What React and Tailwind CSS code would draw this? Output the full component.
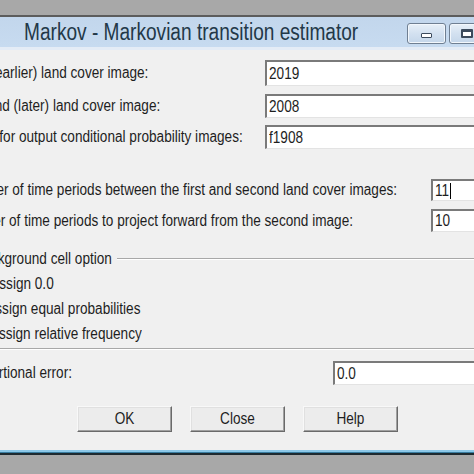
import React from "react";

const font = { fontFamily: '"Liberation Sans", Arial, sans-serif' };

function Label({ end, children, className = "" }) {
  return (
    <div className={"flex justify-end shrink-0 whitespace-nowrap " + className} style={{ width: end }}>
      <span className="inline-block scale-x-[0.85] origin-right">{children}</span>
    </div>
  );
}

function Field({ value, cursor }) {
  return (
    <div className="flex-1 h-full bg-white border-t-2 border-l-2 border-t-[#7a7a7a] border-l-[#7a7a7a] border-b border-r border-b-[#e3e3e3] border-r-[#e3e3e3] flex items-center pl-[2px] -mr-[40px]">
      <span className="inline-block scale-x-[0.85] origin-left">{value}</span>
      {cursor && <span className="inline-block w-px h-[16px] bg-black -ml-[2px]" />}
    </div>
  );
}

function Btn({ children }) {
  return (
    <div className="w-[95px] h-[26px] bg-[#ececec] border border-t-[#f8f8f8] border-l-[#f8f8f8] border-b-[#6a6a6a] border-r-[#6a6a6a] shadow-[inset_-1px_-1px_0_#a0a0a0,inset_1px_1px_0_#e0e0e0] flex items-center justify-center">
      <span className="inline-block scale-x-[0.85]">{children}</span>
    </div>
  );
}

export default function App() {
  return (
    <div className="w-[474px] h-[474px] overflow-hidden bg-[#f0f0f0] flex flex-col text-[16px] text-[#1e1e1e]" style={font}>
      {/* top gray strip */}
      <div className="h-[15px] bg-[#a8a8a8] shrink-0" />
      <div className="h-[2px] bg-[#5c5c5c] shrink-0" />
      {/* title bar */}
      <div className="h-[30px] shrink-0 bg-gradient-to-b from-[#c2d6ec] to-[#c7dbf0] flex items-center">
        <div className="flex-1 min-w-0 whitespace-nowrap pl-[24px] text-[23px] text-[#233848] leading-none pt-[1px]">
          <span className="inline-block scale-x-[0.83] origin-left">Markov - Markovian transition estimator</span>
        </div>
        <div className="shrink-0 w-[67px] flex gap-[3px] self-start mt-[6px]">
          <div className="shrink-0 w-[39px] h-[21px] rounded-[3px] border border-[#6f7f92] bg-gradient-to-b from-[#e8f0f8] via-[#d3e1f0] to-[#c4d6ea] shadow-[inset_0_0_0_1px_#f2f7fc] flex items-center justify-center">
            <div className="w-[11px] h-[5px] mt-[4px] bg-white border border-[#3b4a5c] rounded-[1px]" />
          </div>
          <div className="shrink-0 w-[39px] h-[21px] rounded-[3px] border border-[#6f7f92] bg-gradient-to-b from-[#e8f0f8] via-[#d3e1f0] to-[#c4d6ea] shadow-[inset_0_0_0_1px_#f2f7fc] flex items-center justify-center">
            <div className="w-[12px] h-[9px] ml-[-4px] bg-white border-2 border-[#3b4a5c] border-t-[3px] rounded-[1px]" />
          </div>
        </div>
      </div>
      <div className="h-[3px] bg-[#e4ecf6] shrink-0" />
      {/* body */}
      <div className="flex-1 flex flex-col">
        <div className="h-[10px]" />
        <div className="flex items-center h-[26px]">
          <Label end={148}>First (earlier) land cover image:</Label>
          <div className="w-[117px]" />
          <Field value="2019" />
        </div>
        <div className="h-[8px]" />
        <div className="flex items-center h-[24px]">
          <Label end={160}>Second (later) land cover image:</Label>
          <div className="w-[105px]" />
          <Field value="2008" />
        </div>
        <div className="h-[7px]" />
        <div className="flex items-center h-[24px]">
          <Label end={243}>Prefix for output conditional probability images:</Label>
          <div className="w-[22px]" />
          <Field value="f1908" />
        </div>
        <div className="h-[30px]" />
        <div className="flex items-center h-[22px]">
          <Label end={397}>Number of time periods between the first and second land cover images:</Label>
          <div className="w-[34px]" />
          <Field value="11" cursor />
        </div>
        <div className="h-[8px]" />
        <div className="flex items-center h-[23px]">
          <Label end={353}>Number of time periods to project forward from the second image:</Label>
          <div className="w-[78px]" />
          <Field value="10" />
        </div>
        <div className="h-[17px]" />
        <div className="flex items-center h-[20px]">
          <Label end={112}>Background cell option</Label>
          <div className="w-[5px]" />
          <div className="flex-1 h-px bg-[#a8a8a8] border-b border-white box-content" />
        </div>
        <div className="h-[2px]" />
        <div className="flex items-center h-[25px]">
          <Label end={54}>Assign 0.0</Label>
        </div>
        <div className="flex items-center h-[25px]">
          <Label end={140}>Assign equal probabilities</Label>
        </div>
        <div className="flex items-center h-[25px]">
          <Label end={142}>Assign relative frequency</Label>
        </div>
        <div className="h-[2px]" />
        <div className="h-px bg-[#a8a8a8]" />
        <div className="h-px bg-white" />
        <div className="h-[11px]" />
        <div className="flex items-center h-[24px]">
          <Label end={72}>Proportional error:</Label>
          <div className="w-[261px]" />
          <Field value="0.0" />
        </div>
        <div className="h-[21px]" />
        <div className="flex gap-[18px] pl-[77px]">
          <Btn>OK</Btn>
          <Btn>Close</Btn>
          <Btn>Help</Btn>
        </div>
        <div className="flex-1" />
      </div>
      {/* bottom frame */}
      <div className="h-[2px] bg-[#8cc8e8] shrink-0" />
      <div className="h-[1px] bg-[#3a7da0] shrink-0" />
      <div className="h-[2px] bg-[#1e2a30] shrink-0" />
      <div className="h-[19px] bg-[#a8a8a8] shrink-0" />
    </div>
  );
}
